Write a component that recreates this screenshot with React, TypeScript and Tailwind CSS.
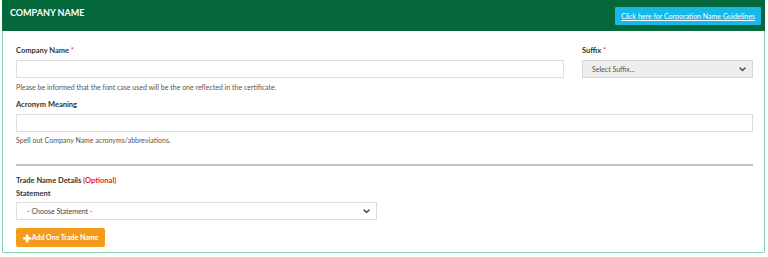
import React from 'react';

// Small bold chevron used in the select boxes
function Chevron() {
  return (
    <svg width="7" height="5" viewBox="0 0 10 7" fill="none" className="shrink-0">
      <path d="M1.5 1.5L5 5L8.5 1.5" stroke="#555" strokeWidth="2.2" strokeLinecap="round" strokeLinejoin="round" />
    </svg>
  );
}

export default function App() {
  return (
    <div className="w-[768px] h-[257px] bg-white font-['Lato',sans-serif] text-[#333]">
      <div className="ml-[2px] w-[763px] h-[253px] border border-t-0 border-[#7fd3ad] rounded-b-[2px] flex flex-col">
        {/* Header */}
        <div className="h-[31px] -mx-px bg-[#05683a] flex items-center justify-between pl-[8px] pr-[4px]">
          <span className="text-white text-[9px] font-bold -mt-[6px]">COMPANY NAME</span>
          <button className="h-[18px] px-[6px] bg-[#14b9e8] text-white text-[7px] underline rounded-[1px] mt-[1px]">
            Click here for Corporation Name Guidelines
          </button>
        </div>

        {/* Body */}
        <div className="flex flex-col pl-[13px] pr-[11px] pt-[15px]">
          <div className="flex gap-[18px]">
            <div className="flex-1 flex flex-col">
              <label className="text-[7.5px] font-bold leading-[10px]">
                Company Name <span className="text-[#e8383d] font-normal">*</span>
              </label>
              <div className="mt-[4px] h-[18px] border border-[#dcdcdc] bg-white" />
              <p className="mt-[5px] text-[7px] text-[#555] leading-[9px]">
                Please be informed that the font case used will be the one reflected in the certificate.
              </p>
            </div>
            <div className="w-[171px] flex flex-col">
              <label className="text-[7.5px] font-bold leading-[10px]">
                Suffix <span className="text-[#e8383d] font-normal">*</span>
              </label>
              <div className="mt-[4px] h-[18px] border border-[#d6d6d6] bg-[#eeeeee] flex items-center justify-between pl-[9px] pr-[6px]">
                <span className="text-[7px] text-[#555]">Select Suffix...</span>
                <Chevron />
              </div>
            </div>
          </div>

          <label className="mt-[8px] text-[7.5px] font-bold leading-[10px]">Acronym Meaning</label>
          <div className="mt-[4px] h-[18px] border border-[#dcdcdc] bg-white" />
          <p className="mt-[4px] text-[7px] text-[#555] leading-[9px]">
            Spell out Company Name acronyms/abbreviations.
          </p>

          <div className="mt-[19px] h-[2px] bg-[#c4c4c4]" />

          <label className="mt-[10px] text-[7.5px] font-bold leading-[10px]">
            Trade Name Details <span className="text-[#ec1c24]">(Optional)</span>
          </label>
          <label className="mt-[3px] text-[7.5px] font-bold leading-[10px]">Statement</label>
          <div className="mt-[3px] w-[361px] h-[18px] border border-[#dcdcdc] bg-white flex items-center justify-between pl-[10px] pr-[6px]">
            <span className="text-[7px] text-[#444]">- Choose Statement -</span>
            <Chevron />
          </div>
          <button className="mt-[8px] w-[89px] h-[19px] bg-[#f39c1c] rounded-[2px] text-white text-[7px] font-bold flex items-center justify-center">
            <span className="text-[10px] leading-none mr-[1px]">✚</span>Add One Trade Name
          </button>
        </div>
      </div>
    </div>
  );
}
